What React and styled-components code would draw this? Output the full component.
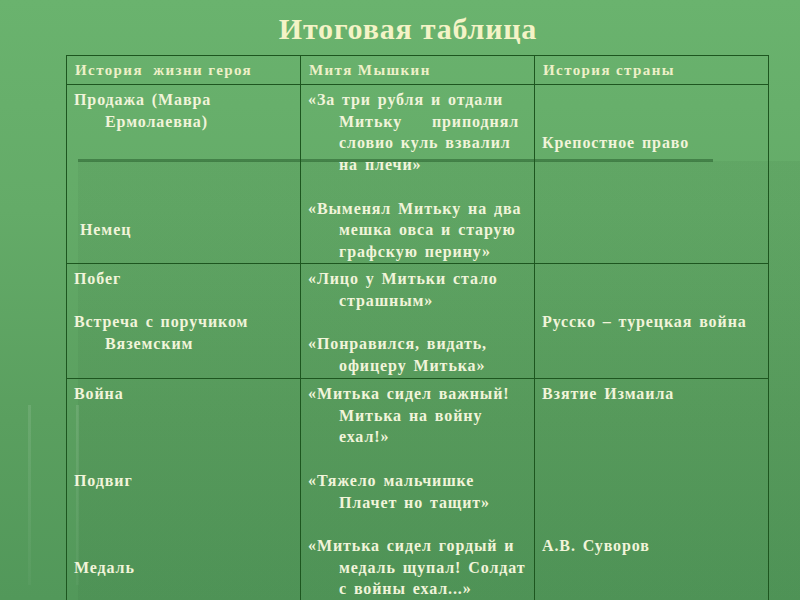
import React from "react"
import styled, { createGlobalStyle } from "styled-components"

const GlobalStyle = createGlobalStyle`
  html, body {
    margin: 0;
    padding: 0;
  }
  body {
    width: 800px;
    height: 600px;
    overflow: hidden;
  }
`

const rows = [
  {
    height: 179,
    cells: [
      [
        { text: "Продажа (Мавра" },
        { text: "Ермолаевна)", indent: true },
        { blank: true },
        { blank: true },
        { blank: true },
        { blank: true },
        { text: "Немец", nudge: true },
      ],
      [
        { text: "«За три рубля и отдали" },
        { text: "Митьку приподнял", indent: true, wide: true },
        { text: "словио куль взвалил", indent: true },
        { text: "на плечи»", indent: true },
        { blank: true },
        { text: "«Выменял Митьку на два" },
        { text: "мешка овса и старую", indent: true },
        { text: "графскую перину»", indent: true },
      ],
      [{ blank: true }, { blank: true }, { text: "Крепостное право" }],
    ],
  },
  {
    height: 115,
    cells: [
      [
        { text: "Побег" },
        { blank: true },
        { text: "Встреча с поручиком" },
        { text: "Вяземским", indent: true },
      ],
      [
        { text: "«Лицо у Митьки стало" },
        { text: "страшным»", indent: true },
        { blank: true },
        { text: "«Понравился, видать," },
        { text: "офицеру Митька»", indent: true },
      ],
      [{ blank: true }, { blank: true }, { text: "Русско – турецкая война" }],
    ],
  },
  {
    height: 224,
    cells: [
      [
        { text: "Война" },
        { blank: true },
        { blank: true },
        { blank: true },
        { text: "Подвиг" },
        { blank: true },
        { blank: true },
        { blank: true },
        { text: "Медаль" },
      ],
      [
        { text: "«Митька сидел важный!" },
        { text: "Митька на войну", indent: true },
        { text: "ехал!»", indent: true },
        { blank: true },
        { text: "«Тяжело мальчишке" },
        { text: "Плачет но тащит»", indent: true },
        { blank: true },
        { text: "«Митька сидел гордый и" },
        { text: "медаль щупал! Солдат", indent: true },
        { text: "с войны ехал...»", indent: true },
      ],
      [
        { text: "Взятие Измаила" },
        { blank: true },
        { blank: true },
        { blank: true },
        { blank: true },
        { blank: true },
        { blank: true },
        { text: "А.В. Суворов" },
      ],
    ],
  },
]

const App = () => {
  return (
    <Page>
      <GlobalStyle />
      <Title>Итоговая таблица</Title>
      <Table>
        <colgroup>
          <Column />
          <Column />
          <Column />
        </colgroup>
        <thead>
          <tr>
            <HeadCell>История&nbsp; жизни героя</HeadCell>
            <HeadCell>Митя Мышкин</HeadCell>
            <HeadCell>История страны</HeadCell>
          </tr>
        </thead>
        <tbody>
          {rows.map((row, i) => (
            <Row key={i} $height={row.height}>
              {row.cells.map((lines, j) => (
                <Cell key={j}>
                  {lines.map((line, k) => (
                    <Line
                      key={k}
                      $indent={line.indent}
                      $wide={line.wide}
                      $nudge={line.nudge}
                    >
                      {line.blank ? "\u00a0" : line.text}
                    </Line>
                  ))}
                </Cell>
              ))}
            </Row>
          ))}
        </tbody>
      </Table>
    </Page>
  )
}

/* STYLE */
const Page = styled.div`
  width: 800px;
  height: 600px;
  box-sizing: border-box;
  padding-top: 11px;
  overflow: hidden;
  font-family: "Liberation Serif", "Times New Roman", serif;
  background:
    linear-gradient(rgba(40, 95, 45, 0.55), rgba(40, 95, 45, 0.55)) 78px 159px / 635px 3px no-repeat,
    linear-gradient(rgba(255, 255, 255, 0.1), rgba(255, 255, 255, 0.03)) 28px 405px / 3px 180px no-repeat,
    linear-gradient(rgba(255, 255, 255, 0.1), rgba(255, 255, 255, 0.03)) 76px 405px / 3px 180px no-repeat,
    linear-gradient(rgba(20, 60, 25, 0.06), rgba(20, 60, 25, 0.06)) 78px 161px / 722px 440px no-repeat,
    linear-gradient(180deg, #6ab36e 0%, #64ab68 35%, #5a9f5f 70%, #52985a 100%);
`

const Title = styled.h1`
  margin: 0 0 8px 0;
  padding-left: 16px;
  height: 36px;
  line-height: 36px;
  text-align: center;
  font-size: 30px;
  font-weight: bold;
  color: #f4f3c6;
  letter-spacing: 0.8px;
`

const Table = styled.table`
  margin-left: 66px;
  width: 702px;
  border-collapse: collapse;
  table-layout: fixed;
  color: #f1f4da;
`

const Column = styled.col`
  width: 234px;
`

const HeadCell = styled.th`
  height: 28px;
  padding: 0 8px;
  border: 1.5px solid #1d561f;
  text-align: left;
  vertical-align: middle;
  font-size: 15px;
  font-weight: bold;
  letter-spacing: 1.4px;
  color: #eef0c8;
  white-space: nowrap;
  overflow: hidden;
`

const Row = styled.tr`
  height: ${({ $height }) => $height}px;
`

const Cell = styled.td`
  padding: 4px 2px 0 7px;
  border: 1.5px solid #1d561f;
  vertical-align: top;
  overflow: hidden;
`

const Line = styled.div`
  font-size: 16px;
  font-weight: bold;
  line-height: 21.7px;
  letter-spacing: 0.9px;
  white-space: nowrap;
  padding-left: ${({ $indent, $nudge }) => ($indent ? 31 : $nudge ? 6 : 0)}px;
  word-spacing: ${({ $wide }) => ($wide ? "25px" : "2px")};
`

export default App
